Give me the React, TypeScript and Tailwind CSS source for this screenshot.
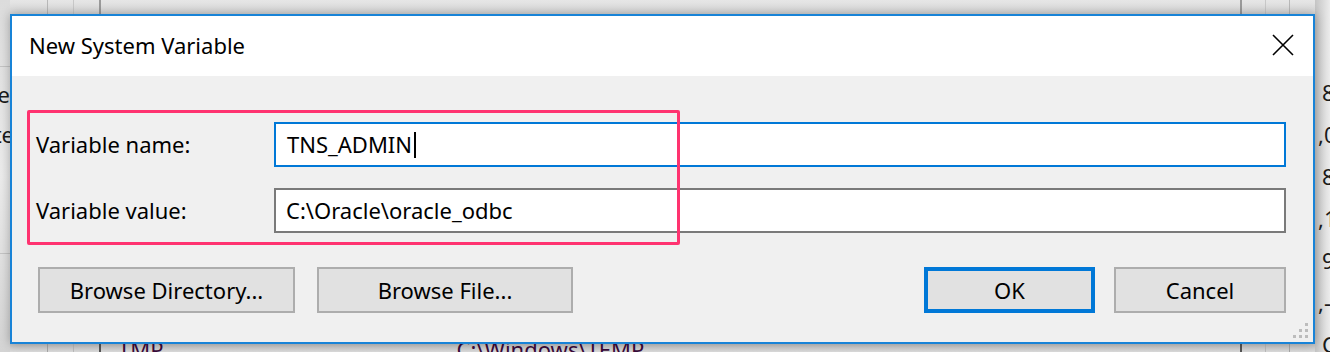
const font = { fontFamily: '"Noto Sans", "Open Sans", Arial, sans-serif' };

function Field({ label, value, focused }: { label: string; value: string; focused?: boolean }) {
  return (
    <div className="flex items-center">
      <div className="w-[262px] pl-[24px]">{label}</div>
      <div
        className={
          focused
            ? "flex h-[45px] flex-1 items-center border-2 border-[#0078d7] bg-white pl-[11px]"
            : "flex h-[45px] flex-1 items-center border-2 border-[#7a7a7a] bg-white pl-[10px]"
        }
      >
        <span>{value}</span>
        {focused && <span className="ml-[2px] h-[26px] w-[2px] bg-black" />}
      </div>
    </div>
  );
}

function Button({ children, width, primary }: { children: string; width: string; primary?: boolean }) {
  return (
    <button
      className={
        primary
          ? `${width} flex h-[46px] items-center justify-center border-4 border-[#0078d7] bg-[#e1e1e1]`
          : `${width} flex h-[46px] items-center justify-center border-2 border-[#adadad] bg-[#e1e1e1]`
      }
    >
      {children}
    </button>
  );
}

function Dialog() {
  return (
    <div className="relative z-10 h-[330px] border-2 border-[#1883d7] bg-[#f0f0f0] shadow-[0_0_10px_rgba(0,0,0,0.3)]">
      <div className="flex h-[60px] items-center justify-between bg-white pl-[17px] pr-[19px]">
        <span className="pb-[2px]">New System Variable</span>
        <svg width="22" height="22" viewBox="0 0 22 22" className="mt-[-2px]">
          <path d="M1 1 L21 21 M21 1 L1 21" stroke="#000" strokeWidth="1.6" />
        </svg>
      </div>

      <div className="flex flex-col pr-[27px] pt-[46px]">
        <div className="flex flex-col gap-[21px]">
          <Field label="Variable name:" value="TNS_ADMIN" focused />
          <Field label="Variable value:" value="C:\Oracle\oracle_odbc" />
        </div>

        <div className="mt-[34px] flex items-center gap-[22px] pl-[26px]">
          <Button width="w-[257px]">Browse Directory...</Button>
          <Button width="w-[256px]">Browse File...</Button>
          <div className="ml-auto flex gap-[19px]">
            <Button width="w-[171px]" primary>
              OK
            </Button>
            <Button width="w-[172px]">Cancel</Button>
          </div>
        </div>
      </div>

      {/* resize grip */}
      <div className="absolute bottom-[4px] right-[5px] grid grid-cols-3 gap-[3px]">
        <span className="h-[3px] w-[3px]" />
        <span className="h-[3px] w-[3px]" />
        <span className="h-[3px] w-[3px] bg-[#bcbcbc]" />
        <span className="h-[3px] w-[3px]" />
        <span className="h-[3px] w-[3px] bg-[#bcbcbc]" />
        <span className="h-[3px] w-[3px] bg-[#bcbcbc]" />
        <span className="h-[3px] w-[3px] bg-[#bcbcbc]" />
        <span className="h-[3px] w-[3px] bg-[#bcbcbc]" />
        <span className="h-[3px] w-[3px] bg-[#bcbcbc]" />
      </div>

      {/* highlight annotation drawn over the form */}
      <div className="pointer-events-none absolute left-[15px] top-[94px] h-[135px] w-[653px] rounded-[2px] border-[3px] border-[#ff3370]" />
    </div>
  );
}

export default function App() {
  return (
    <div className="flex h-[352px] w-[1330px] overflow-hidden bg-[#ececec] text-[22px] text-black" style={font}>
      {/* left edge of the window behind */}
      <div className="flex w-[10px] flex-col items-end overflow-hidden bg-gradient-to-b from-[#dcdcdc] via-[#ececec] to-[#d4d4d4] leading-[22px] text-[#1a1a1a]">
        <div className="mt-[66px] h-px w-full shrink-0 bg-[#c4c4c4]" />
        <span className="mt-[16px] whitespace-nowrap">se</span>
        <span className="-mr-[4px] mt-[18px] whitespace-nowrap">ste</span>
        <div className="mt-[108px] h-px w-full shrink-0 bg-[#c4c4c4]" />
      </div>

      <div className="flex w-[1305px] flex-col">
        {/* column headers of the list behind */}
        <div className="flex h-[14px] shrink-0 bg-gradient-to-b from-[#e6e6e6] to-[#d8d8d8]">
          <div className="ml-[37px] w-px bg-[#b8b8b8]" />
          <div className="ml-[25px] w-px bg-[#c8c8c8]" />
          <div className="ml-[25px] w-[2px] bg-[#9a9a9a]" />
          <div className="ml-auto w-[2px] bg-[#9a9a9a]" />
          <div className="ml-[23px] w-px bg-[#c8c8c8]" />
          <div className="ml-[23px] mr-[25px] w-px bg-[#b8b8b8]" />
        </div>

        <Dialog />

        {/* a list row peeking out under the dialog */}
        <div className="flex flex-1 overflow-hidden bg-gradient-to-b from-[#c6c6c6] to-[#dcdcdc] leading-[22px] text-[#3a0a3a]">
          <div className="ml-[37px] w-px bg-[#a8a8a8]" />
          <div className="ml-[25px] w-px bg-[#bcbcbc]" />
          <div className="ml-[25px] w-[2px] bg-[#555]" />
          <span className="-mt-[6px] ml-[17px] whitespace-nowrap">TMP</span>
          <span className="-mt-[6px] ml-[293px] whitespace-nowrap">C:\Windows\TEMP</span>
          <div className="ml-auto w-[2px] bg-[#555]" />
          <div className="ml-[23px] w-px bg-[#bcbcbc]" />
          <div className="ml-[23px] mr-[25px] w-px bg-[#a8a8a8]" />
        </div>
      </div>

      {/* right edge: value column of the list behind */}
      <div className="flex flex-1 flex-col gap-[20px] overflow-hidden bg-gradient-to-r from-[#c4c4c4] to-[#ececec] pt-[81px] leading-[22px] text-[#1a1a1a]">
        <span className="pl-[7px]">8</span>
        <span className="pl-[3px] whitespace-nowrap">,0</span>
        <span className="pl-[7px]">8</span>
        <span className="pl-[3px] whitespace-nowrap">,1</span>
        <span className="pl-[7px]">9</span>
        <span className="pl-[3px] whitespace-nowrap">,-</span>
        <span className="pl-[7px]">C</span>
      </div>
    </div>
  );
}
